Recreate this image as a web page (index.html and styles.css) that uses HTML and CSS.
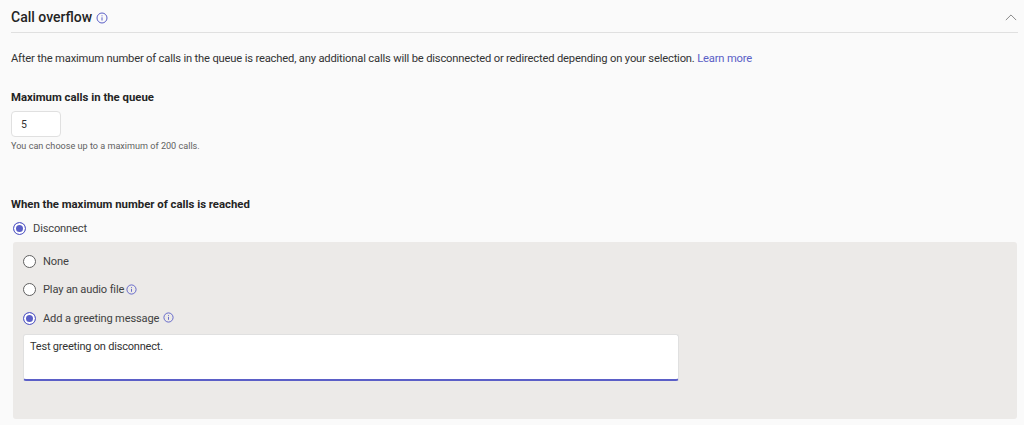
FILE: index.html
```html
<!DOCTYPE html>
<html lang="en">
<head>
<meta charset="utf-8">
<title>Call overflow</title>
<link rel="stylesheet" href="styles.css">
</head>
<body>
<main class="page">
  <header class="head">
    <h2 class="title">Call overflow</h2>
    <svg class="info info-head" viewBox="0 0 12 12"><circle cx="6" cy="6" r="5"/><path d="M6 5.3v3.2M6 3.4v.9"/></svg>
    <svg class="chevron" viewBox="0 0 14 8"><path d="M1 7l6-6 6 6"/></svg>
  </header>
  <p class="desc">After the maximum number of calls in the queue is reached, any additional calls will be disconnected or redirected depending on your selection. <a class="link" href="#">Learn more</a></p>
  <h3 class="label label-max">Maximum calls in the queue</h3>
  <div class="input">5</div>
  <p class="hint">You can choose up to a maximum of 200 calls.</p>
  <h3 class="label label-when">When the maximum number of calls is reached</h3>
  <div class="radio-row row-top"><span class="radio on"></span><span class="rtext">Disconnect</span></div>
  <section class="panel">
    <div class="radio-row row-none"><span class="radio"></span><span class="rtext">None</span></div>
    <div class="radio-row row-audio"><span class="radio"></span><span class="rtext">Play an audio file</span>
      <svg class="info info-a" viewBox="0 0 12 12"><circle cx="6" cy="6" r="5"/><path d="M6 5.3v3.2M6 3.4v.9"/></svg></div>
    <div class="radio-row row-greet"><span class="radio on"></span><span class="rtext">Add a greeting message</span>
      <svg class="info info-g" viewBox="0 0 12 12"><circle cx="6" cy="6" r="5"/><path d="M6 5.3v3.2M6 3.4v.9"/></svg></div>
    <div class="textarea">Test greeting on disconnect.</div>
  </section>
</main>
</body>
</html>
```
FILE: styles.css
```css
* { box-sizing: border-box; }
html, body { margin: 0; height: 425px; overflow: hidden; }
body { background: #fafafa; color: #242424; font-family: Roboto, "Noto Sans", sans-serif; font-size: 11.1px; }
.page { padding: 0 6px 0 11px; height: 425px; }
.head { display: flex; align-items: center; height: 33px; border-bottom: 1px solid #e0e0e0; padding-top: 3px; }
.title { margin: 0; font-size: 14px; font-weight: 500; line-height: 29px; }
.info { fill: none; stroke: #5b5fc7; stroke-width: 1; }
.info-head { width: 12px; height: 12px; margin-left: 4px; }
.chevron { width: 12px; height: 7px; margin-left: auto; margin-right: 1px; fill: none; stroke: #757575; stroke-width: 1; }
.desc { margin: 18px 0 0; line-height: 16px; color: #333; font-size: 11.2px; letter-spacing: -0.178px; }
.link { color: #5b5fc7; text-decoration: none; }
.label { margin: 0; font-size: 11.35px; font-weight: 700; line-height: 16px; }
.label-max { margin-top: 22px; }
.input { width: 50px; height: 26px; margin-top: 6px; padding: 1px 0 0 9px; background: #fff; border: 1px solid #e0e0e0; border-radius: 4px; color: #333; line-height: 24px; font-size: 10.5px; }
.hint { margin: 3px 0 0; color: #616161; font-size: 9.1px; line-height: 13px; }
.label-when { margin-top: 43px; }
.radio-row { display: flex; align-items: center; height: 16px; }
.row-top { margin-top: 8px; }
.radio { flex: none; width: 13px; height: 13px; border: 1px solid #616161; border-radius: 50%; background: #fff; }
.radio.on { border-color: #5b5fc7; background: #5b5fc7; box-shadow: inset 0 0 0 2px #fff; }
.rtext { align-self: flex-start; margin-left: 7px; padding-top: 1px; color: #424242; line-height: 16px; letter-spacing: -0.15px; }
.row-top .radio { margin-left: 2px; }
.row-top .rtext { margin-left: 7px; }
.panel { margin: 6px 1px 0 2px; height: 177px; padding: 11px 0 0 10px; background: #eceae8; border-radius: 3px; }
.row-audio { margin-top: 12px; }
.row-greet { margin-top: 13px; }
.info-a { width: 11px; height: 11px; margin-left: 2px; }
.info-g { width: 11px; height: 11px; margin-left: 4px; margin-top: -2px; }
.textarea { width: 656px; height: 47px; margin-top: 8px; padding: 4px 6px; background: #fff; border: 1px solid #e0e0e0; border-bottom: 2px solid #5b5fc7; border-radius: 3px; color: #333; font-size: 11px; letter-spacing: -0.2px; line-height: 16px; }
```
